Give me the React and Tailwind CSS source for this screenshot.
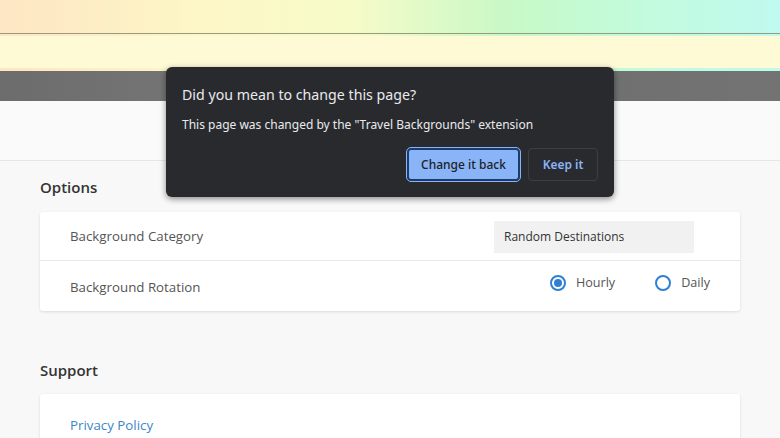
import React from 'react'

const Radio = ({ checked, label }) => (
  <label className="flex items-center gap-[10px] text-[12.6px] text-[#555]">
    <span className="flex h-[16px] w-[16px] items-center justify-center rounded-full border-2 border-[#2f7fd4]">
      {checked && <span className="h-[8px] w-[8px] rounded-full bg-[#2f7fd4]" />}
    </span>
    {label}
  </label>
)

export default function App() {
  return (
    <div
      className="relative h-[438px] w-[780px] overflow-hidden bg-[#f8f8f8]"
      style={{ fontFamily: '"Open Sans", "Noto Sans", sans-serif' }}
    >
      {/* banner strip */}
      <div className="bg-[linear-gradient(90deg,#fde6c4_0%,#fdf6c6_25%,#f6fbc8_45%,#c8f9c6_65%,#c2fbdc_82%,#c0f9ef_100%)]">
        <div className="h-[33px]" />
        <div className="h-px bg-[#9a9a80]" />
        <div className="h-[2px]" />
        <div className="h-[32px] bg-[#fffad6]" />
        <div className="h-[3px]" />
      </div>
      <div className="h-[30px] bg-[linear-gradient(90deg,#6c6c6c,#777_30%,#6e6e6e_60%,#737373)]" />
      <div className="h-[60px] border-b border-[#e6e6e6] bg-[#fafafa]" />

      {/* content */}
      <div className="px-[40px]">
        <h2 className="mt-[15px] text-[15px] font-semibold text-[#333]">Options</h2>
        <div className="mt-[13px] rounded-[3px] bg-white shadow-[0_1px_3px_rgba(0,0,0,0.12)]">
          <div className="flex h-[49px] items-center justify-between border-b border-[#e8e8e8] pl-[30px] pr-[46px]">
            <span className="pt-[2px] text-[13.3px] text-[#555]">Background Category</span>
            <div className="mt-[2px] flex h-[32px] w-[200px] items-center bg-[#f1f1f1] px-[10px] text-[12px] text-[#333]">
              Random Destinations
            </div>
          </div>
          <div className="flex h-[50px] items-center justify-between pl-[30px] pr-[30px]">
            <span className="pt-[4px] text-[13.3px] text-[#555]">Background Rotation</span>
            <div className="mb-[4px] flex items-center gap-[40px]">
              <Radio checked label="Hourly" />
              <Radio label="Daily" />
            </div>
          </div>
        </div>

        <h2 className="mt-[48px] text-[15px] font-semibold text-[#333]">Support</h2>
        <div className="mt-[13px] h-[60px] rounded-[3px] bg-white pl-[30px] pt-[18px] shadow-[0_1px_3px_rgba(0,0,0,0.12)]">
          <a className="text-[13.3px] text-[#3a87c8]">Privacy Policy</a>
        </div>
      </div>

      {/* extension dialog */}
      <div
        className="absolute left-[166px] top-[67px] h-[130px] w-[448px] rounded-[6px] bg-[#292a2d] px-[16px] pt-[18px] shadow-[0_2px_6px_rgba(0,0,0,0.45)]"
        style={{ fontFamily: '"Noto Sans", "Open Sans", sans-serif' }}
      >
        <div className="text-[14.2px] leading-[20px] text-[#e8eaed]">Did you mean to change this page?</div>
        <div className="mt-[12px] text-[12px] leading-[16px] text-[#e8eaed]">
          This page was changed by the "Travel Backgrounds" extension
        </div>
        <div className="mt-[15px] flex justify-end gap-[8px]">
          <button className="h-[33px] w-[113px] rounded-[4px] border-2 border-[#1a3b6b] bg-[#8ab4f8] text-[12px] font-medium text-[#202124] outline outline-1 outline-[#8ab4f8]">
            Change it back
          </button>
          <button className="h-[33px] w-[70px] rounded-[4px] border border-[#3c4043] text-[12px] font-semibold text-[#8ab4f8]">
            Keep it
          </button>
        </div>
      </div>
    </div>
  )
}
